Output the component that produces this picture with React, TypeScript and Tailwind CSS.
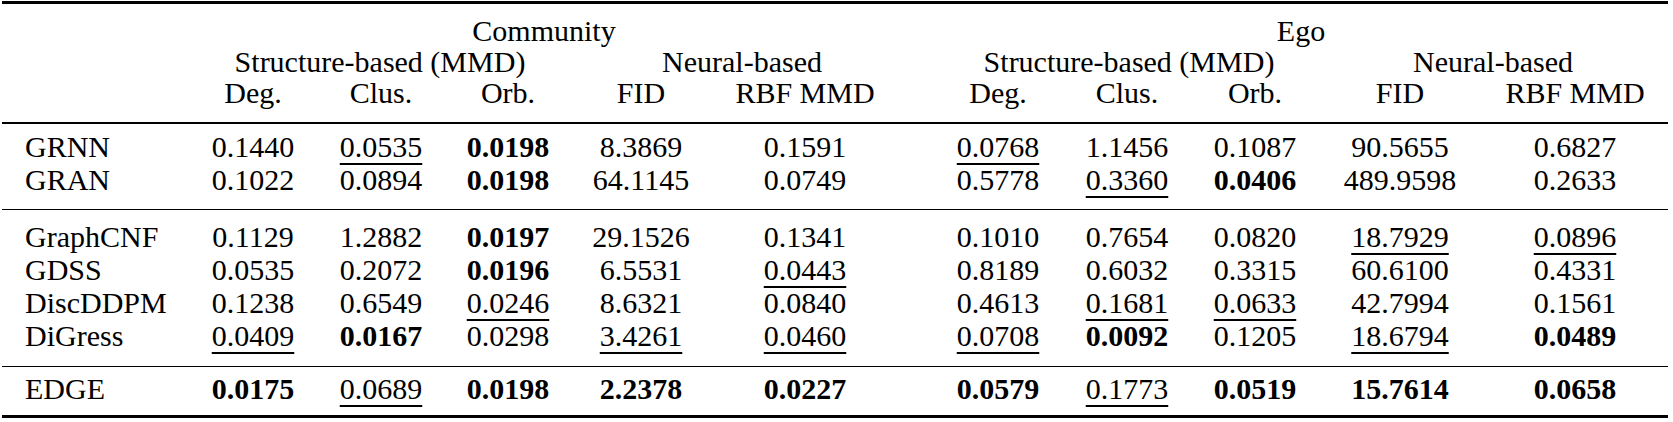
import React from "react";

type Cell = { v: string; b?: boolean; u?: boolean };

const c = (v: string, flags = ""): Cell => ({ v, b: flags.includes("b"), u: flags.includes("u") });

const grid =
  "grid grid-cols-[187px_128px_128px_126px_140px_188px_35px_128px_130px_126px_164px_186px]";

const block1: [string, Cell[]][] = [
  ["GRNN", [c("0.1440"), c("0.0535", "u"), c("0.0198", "b"), c("8.3869"), c("0.1591"), c("0.0768", "u"), c("1.1456"), c("0.1087"), c("90.5655"), c("0.6827")]],
  ["GRAN", [c("0.1022"), c("0.0894"), c("0.0198", "b"), c("64.1145"), c("0.0749"), c("0.5778"), c("0.3360", "u"), c("0.0406", "b"), c("489.9598"), c("0.2633")]],
];
const block2: [string, Cell[]][] = [
  ["GraphCNF", [c("0.1129"), c("1.2882"), c("0.0197", "b"), c("29.1526"), c("0.1341"), c("0.1010"), c("0.7654"), c("0.0820"), c("18.7929", "u"), c("0.0896", "u")]],
  ["GDSS", [c("0.0535"), c("0.2072"), c("0.0196", "b"), c("6.5531"), c("0.0443", "u"), c("0.8189"), c("0.6032"), c("0.3315"), c("60.6100"), c("0.4331")]],
  ["DiscDDPM", [c("0.1238"), c("0.6549"), c("0.0246", "u"), c("8.6321"), c("0.0840"), c("0.4613"), c("0.1681", "u"), c("0.0633", "u"), c("42.7994"), c("0.1561")]],
  ["DiGress", [c("0.0409", "u"), c("0.0167", "b"), c("0.0298"), c("3.4261", "u"), c("0.0460", "u"), c("0.0708", "u"), c("0.0092", "b"), c("0.1205"), c("18.6794", "u"), c("0.0489", "b")]],
];
const block3: [string, Cell[]][] = [
  ["EDGE", [c("0.0175", "b"), c("0.0689", "u"), c("0.0198", "b"), c("2.2378", "b"), c("0.0227", "b"), c("0.0579", "b"), c("0.1773", "u"), c("0.0519", "b"), c("15.7614", "b"), c("0.0658", "b")]],
];

function Val({ cell }: { cell: Cell }) {
  return (
    <div className="text-center">
      <span
        className={
          (cell.b ? "font-bold " : "") +
          (cell.u ? "underline decoration-[1.5px] underline-offset-[6px] " : "")
        }
      >
        {cell.v}
      </span>
    </div>
  );
}

function Row({ name, cells }: { name: string; cells: Cell[] }) {
  return (
    <div className={grid + " h-[33px] leading-[33px]"}>
      <div className="pl-[23px]">{name}</div>
      {cells.slice(0, 5).map((x, i) => (
        <Val key={i} cell={x} />
      ))}
      <div />
      {cells.slice(5).map((x, i) => (
        <Val key={i + 5} cell={x} />
      ))}
    </div>
  );
}

function Block({ rows, cls }: { rows: [string, Cell[]][]; cls: string }) {
  return (
    <div className={cls}>
      {rows.map(([n, cs]) => (
        <Row key={n} name={n} cells={cs} />
      ))}
    </div>
  );
}

export default function App() {
  return (
    <div className="w-[1673px] h-[422px] overflow-hidden bg-white text-black text-[30px] [font-family:'Liberation_Serif',serif] pl-[2px] pt-[1px]">
      <div className="w-[1666px]">
        <div className="border-t-[3px] border-black" />
        <div className="pt-[11px] pb-[14px] leading-[31px] whitespace-nowrap">
          <div className={grid}>
            <div />
            <div className="col-span-5 text-center">Community</div>
            <div />
            <div className="col-span-5 text-center">Ego</div>
          </div>
          <div className={grid}>
            <div />
            <div className="col-span-3 text-center">Structure-based (MMD)</div>
            <div className="col-span-2 text-center pl-[14px]">Neural-based</div>
            <div />
            <div className="col-span-3 text-center pl-[6px]">Structure-based (MMD)</div>
            <div className="col-span-2 text-center">Neural-based</div>
          </div>
          <div className={grid}>
            <div />
            <div className="text-center">Deg.</div>
            <div className="text-center">Clus.</div>
            <div className="text-center">Orb.</div>
            <div className="text-center">FID</div>
            <div className="text-center">RBF MMD</div>
            <div />
            <div className="text-center">Deg.</div>
            <div className="text-center">Clus.</div>
            <div className="text-center">Orb.</div>
            <div className="text-center">FID</div>
            <div className="text-center">RBF MMD</div>
          </div>
        </div>
        <div className="border-t-[2px] border-black" />
        <Block rows={block1} cls="pt-[6px] pb-[13px]" />
        <div className="border-t-[1.5px] border-black" />
        <Block rows={block2} cls="pt-[10px] pb-[14px]" />
        <div className="border-t-[1.5px] border-black" />
        <Block rows={block3} cls="pt-[5px] pb-[10px]" />
        <div className="border-t-[3px] border-black" />
      </div>
    </div>
  );
}
